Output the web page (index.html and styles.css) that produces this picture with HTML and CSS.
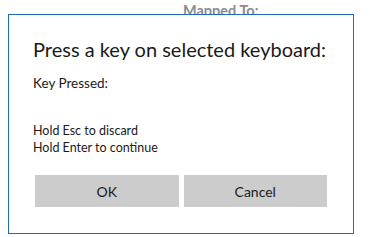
FILE: index.html
```html
<!DOCTYPE html>
<html lang="en">
<head>
<meta charset="UTF-8">
<title>Press a key</title>
<link rel="stylesheet" href="styles.css">
</head>
<body>
    <div class="page">
        <h3 class="mapped">Mapped To:</h3>
    </div>

    <!-- modal dialog shown over the mapping page -->
    <div class="dialog">
        <h2 class="dialog-title">Press a key on selected keyboard:</h2>
        <p class="pressed">Key Pressed:</p>
        <p class="hint">Hold Esc to discard<br>Hold Enter to continue</p>
        <div class="buttons">
            <button class="btn">OK</button>
            <button class="btn">Cancel</button>
        </div>
    </div>
</body>
</html>
```

FILE: styles.css
```css
body {
    margin: 0;
    font-family: Lato, "Noto Sans", sans-serif;
    background: #fff;
    color: #1a1a1a;
}

.page {
    padding: 2px 0 0 183px;
}

.mapped {
    margin: 0;
    font-size: 14.5px;
    font-weight: bold;
    color: #8c8c8c;
}

.dialog {
    position: absolute;
    left: 8px;
    top: 14px;
    width: 292px;
    height: 218px;
    padding: 0 26px;
    background: #fff;
    border: 1px solid #1f6cb5;
}

.dialog-title {
    margin: 20px 0 0 -2px;
    font-size: 20px;
    font-weight: normal;
    line-height: 28px;
    white-space: nowrap;
}

.pressed {
    margin: 12px 0 0 -2px;
    font-size: 13.5px;
    line-height: 17px;
}

.hint {
    margin: 30px 0 0 -2px;
    font-size: 12.5px;
    line-height: 17px;
}

.buttons {
    display: flex;
    gap: 5px;
    margin-top: 19px;
}

.btn {
    flex: 1;
    height: 32px;
    border: none;
    background: #cccccc;
    font-family: inherit;
    font-size: 14px;
    color: #1a1a1a;
}
```
